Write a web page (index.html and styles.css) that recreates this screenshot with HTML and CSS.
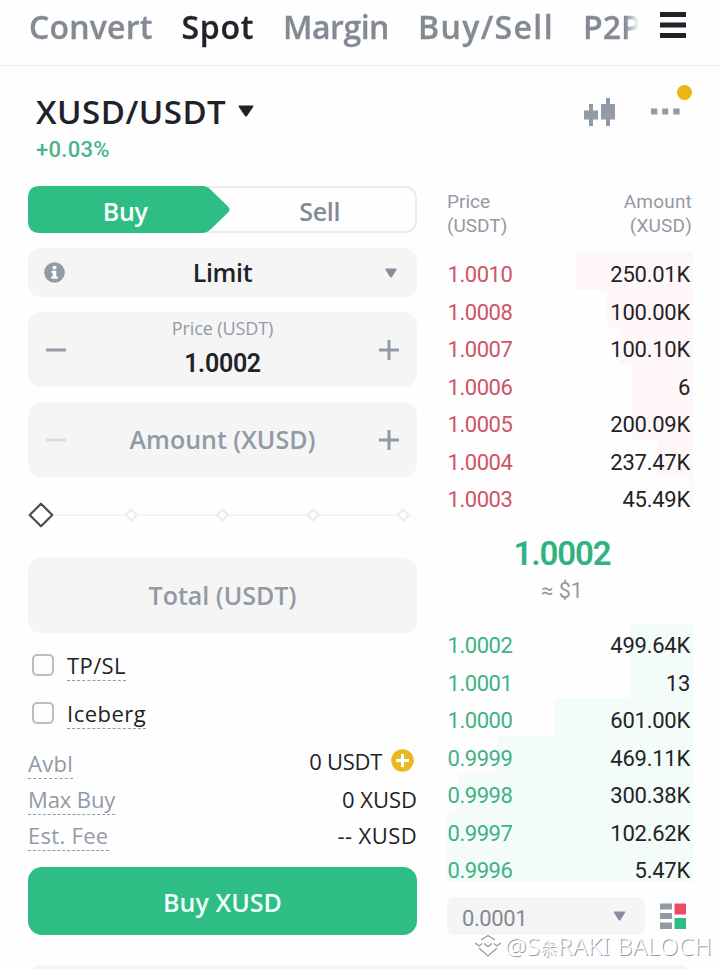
FILE: index.html
```html
<!DOCTYPE html>
<html lang="en">
<head>
<meta charset="utf-8">
<title>XUSD/USDT Spot</title>
<link rel="stylesheet" href="styles.css">
</head>
<body>
<div class="app">
  <header class="topbar">
    <nav class="tabs">
      <span class="tab t-convert">Convert</span>
      <span class="tab t-spot active">Spot</span>
      <span class="tab t-margin">Margin</span>
      <span class="tab t-buysell">Buy/Sell</span>
      <span class="tab t-p2p">P2P</span>
    </nav>
    <svg class="menu" width="26" height="26" viewBox="0 0 26 26"><path d="M0 0h26v5H0zM0 10.500h26v5H0zM0 21h26v5H0z" fill="#1e2329"/></svg>
  </header>

  <section class="pair">
    <div>
      <div class="pair-name"><span class="pair-text">XUSD/USDT</span><svg width="16" height="12" viewBox="0 0 16 12"><path d="M1.2.5h13.6q1 0 .5 1.2L9 11q-1 1-2 0L.7 1.700Q.2.500 1.200.500z" fill="#1e2329"/></svg></div>
      <div class="change">+0.03%</div>
    </div>
    <div class="pair-icons">
      <svg width="32" height="28" viewBox="0 0 32 28"><path d="M0 12.500h5V6h4v6.500h5v9H9V28H5v-6.500H0zM17 6h5V0h4v6h5v15.500h-5V28h-4v-6.500h-5z" fill="#929aa5"/></svg>
      <div class="more"><svg width="30" height="7" viewBox="0 0 30 7"><path d="M0 .5h6.300v6H0zM11.200.5h6v6h-6zM22.300.5h6.300v6h-6.300z" fill="#929aa5"/></svg><i class="dot"></i></div>
    </div>
  </section>

  <main class="columns">
    <section class="form">
      <div class="sides">
        <svg class="sides-bg" width="202" height="47" viewBox="0 0 202 47"><path d="M12 0H174Q179 0 183 4L200 20.500Q203 23.500 200 26.500L183 43Q179 47 174 47H12Q0 47 0 35V12Q0 0 12 0z" fill="#2ebd85"/></svg>
        <span class="side buy">Buy</span><span class="side sell">Sell</span>
      </div>
      <div class="field type">
        <svg width="21" height="21" viewBox="0 0 21 21"><circle cx="10.500" cy="10.500" r="10.300" fill="#929aa5"/><path d="M8.700 4h3.600v3.200H8.700zM7.500 8.700h4.800v6h1.500v2H7.200v-2h1.500v-4H7.500z" fill="#fff"/></svg>
        <span class="limit">Limit</span>
        <svg width="12" height="10" viewBox="0 0 12 10"><path d="M1 .5h10q1.200 0 .5 1.200L7 9q-1 1-2 0L.5 1.700Q-.2.500 1 .500z" fill="#848e9c"/></svg>
      </div>
      <div class="field price">
        <svg class="step" width="20" height="20" viewBox="0 0 20 20"><path d="M0 8.500h20v3H0z" fill="#929aa5"/></svg>
        <div class="stack"><span class="label">Price (USDT)</span><span class="value">1.0002</span></div>
        <svg class="step" width="20" height="20" viewBox="0 0 20 20"><path d="M0 8.500h8.500V0h3v8.500H20v3h-8.500V20h-3v-8.500H0z" fill="#929aa5"/></svg>
      </div>
      <div class="field amount">
        <svg class="step" width="20" height="20" viewBox="0 0 20 20"><path d="M0 8.500h20v3H0z" fill="#d9dce0"/></svg>
        <span class="hint h-amount">Amount (XUSD)</span>
        <svg class="step" width="20" height="20" viewBox="0 0 20 20"><path d="M0 8.500h8.500V0h3v8.500H20v3h-8.500V20h-3v-8.500H0z" fill="#929aa5"/></svg>
      </div>
      <svg class="slider" width="389" height="28" viewBox="0 0 389 28">
        <path d="M26 14H375" stroke="#f3f4f5" stroke-width="2"/>
        <g fill="#fff" stroke="#eaecef" stroke-width="2" stroke-linejoin="round"><path d="M103.500 8.500l5.500 5.500-5.500 5.500L98 14zM194.500 8.500l5.500 5.500-5.500 5.500L189 14zM285 8.500l5.500 5.500-5.500 5.500-5.500-5.500zM375.500 8.500l5.500 5.500-5.500 5.500-5.500-5.500z"/></g>
        <path d="M13 2.700L24.300 14 13 25.300 1.700 14z" fill="#fff" stroke="#474d57" stroke-width="2.200" stroke-linejoin="round"/>
      </svg>
      <div class="field total"><span class="hint h-total">Total (USDT)</span></div>
      <div class="check"><i class="box"></i><span class="under tpsl">TP/SL</span></div>
      <div class="check"><i class="box"></i><span class="under ice">Iceberg</span></div>
      <dl class="facts">
        <div class="fact"><dt class="under avbl">Avbl</dt><dd class="with-plus"><span class="v1">0 USDT</span><svg width="23" height="23" viewBox="0 0 23 23"><circle cx="11.500" cy="11.500" r="11.300" fill="#e9b91f"/><path d="M5 10h5V5h3v5h5v3h-5v5h-3v-5H5z" fill="#fff"/></svg></dd></div>
        <div class="fact"><dt class="under maxbuy">Max Buy</dt><dd class="v2">0 XUSD</dd></div>
        <div class="fact"><dt class="under fee">Est. Fee</dt><dd class="v3">-- XUSD</dd></div>
      </dl>
      <div class="submit"><span>Buy XUSD</span></div>
    </section>

    <section class="book">
      <div class="book-head"><span>Price<br>(USDT)</span><span class="right">Amount<br>(XUSD)</span></div>
      <div class="rows asks">
        <div class="row w47"><span>1.0010</span><b>250.01K</b></div>
        <div class="row w35"><span>1.0008</span><b>100.00K</b></div>
        <div class="row w29"><span>1.0007</span><b>100.10K</b></div>
        <div class="row w24"><span>1.0006</span><b>6</b></div>
        <div class="row w24"><span>1.0005</span><b>200.09K</b></div>
        <div class="row w14"><span>1.0004</span><b>237.47K</b></div>
        <div class="row w1"><span>1.0003</span><b>45.49K</b></div>
      </div>
      <div class="last">1.0002</div>
      <div class="fiat">≈ $1</div>
      <div class="rows bids">
        <div class="row w25"><span>1.0002</span><b>499.64K</b></div>
        <div class="row w25"><span>1.0001</span><b>13</b></div>
        <div class="row w56"><span>1.0000</span><b>601.00K</b></div>
        <div class="row w80"><span>0.9999</span><b>469.11K</b></div>
        <div class="row w95"><span>0.9998</span><b>300.38K</b></div>
        <div class="row w100"><span>0.9997</span><b>102.62K</b></div>
        <div class="row w100 end"><span>0.9996</span><b>5.47K</b></div>
      </div>
      <div class="book-foot">
        <div class="tick"><span>0.0001</span><svg width="13" height="10" viewBox="0 0 12 10"><path d="M1 .5h10q1.200 0 .5 1.200L7 9q-1 1-2 0L.5 1.700Q-.2.500 1 .500z" fill="#848e9c"/></svg></div>
        <svg width="27" height="27" viewBox="0 0 27 27"><path d="M0 .5h12v6H0zM0 10h12v6H0zM0 19.500h12v6.500H0z" fill="#929aa5"/><path d="M14.500.5H26v11H14.500z" fill="#ea4d63"/><path d="M14.500 15H26v11H14.500z" fill="#2ebd85"/></svg>
      </div>
    </section>
  </main>
  <div class="next-panel"></div>
  <div class="watermark">
    <svg width="28" height="24" viewBox="0 0 28 24"><g fill="none" stroke="#fff" stroke-width="3"><path d="M7 6l7-4.500L21 6M1 9l4 3 3-2.500M27 9l-4 3-3-2.500M10 9.500l4 3 4-3M5 14l9 8 9-8"/></g><g fill="none" stroke="#929aa5" stroke-width="1.200"><path d="M7 6l7-4.500L21 6M1 9l4 3 3-2.500M27 9l-4 3-3-2.500M10 9.500l4 3 4-3M5 14l9 8 9-8"/></g></svg>
    <span>@S<small>叅</small>RAKI BALOCH</span>
  </div>
</div>
</body>
</html>
```
FILE: styles.css
```css
* { box-sizing: border-box; }
body { margin: 0; background: #fefefe; color: #1e2329; font-family: "Open Sans", "Noto Sans", sans-serif; }
svg { display: block; flex: none; }
.app { position: relative; width: 720px; height: 969px; overflow: hidden; }
.topbar { display: flex; height: 66px; border-bottom: 1px solid #eaecef; padding: 0 34px 0 29px; justify-content: space-between; }
.tabs { display: flex; width: 611px; gap: 29px; overflow: hidden; line-height: 53px; font-size: 32px; font-weight: 600; color: #848a93; white-space: nowrap; -webkit-text-stroke: .3px currentColor; -webkit-mask-image: linear-gradient(90deg, #000 596px, transparent 610px); mask-image: linear-gradient(90deg, #000 596px, transparent 610px); }
.tab { flex: none; }
.t-convert { letter-spacing: .2px; }
.t-spot { letter-spacing: .7px; }
.t-margin { letter-spacing: -.5px; }
.t-buysell { letter-spacing: 1.4px; }
.active { color: #1e2329; }
.menu { margin-top: 12px; }
.pair { display: flex; justify-content: space-between; height: 120px; padding: 0 39px 0 36px; }
.pair-name { display: flex; align-items: center; gap: 12px; height: 46px; margin-top: 22px; font-size: 33px; font-weight: 600; line-height: 46px; letter-spacing: .5px; }
.pair-text { padding-top: 1px; }
.change { margin-top: 1px; font: 500 22px/30px Roboto, sans-serif; letter-spacing: .3px; color: #4ab58a; }
.pair-icons { display: flex; gap: 35px; padding-top: 32px; }
.more { position: relative; padding-top: 10px; }
.dot { position: absolute; right: -11px; top: -13px; width: 15px; height: 15px; border-radius: 50%; background: #edb711; }
.columns { display: flex; gap: 30px; padding-left: 28px; }
.form { width: 389px; display: flex; flex-direction: column; }
.sides { position: relative; display: flex; height: 47px; border-radius: 12px; box-shadow: inset 0 0 0 2px #ececee; font-size: 25px; font-weight: 600; line-height: 50px; letter-spacing: -.3px; text-align: center; }
.sides-bg { position: absolute; left: 0; top: 0; }
.side { position: relative; width: 195px; }
.buy { color: #fff; }
.sell { color: #848a93; }
.field { display: flex; align-items: center; justify-content: space-between; padding: 0 18px; background: #f5f5f5; border-radius: 13px; font-size: 25px; font-weight: 600; }
.type { height: 49px; margin-top: 15px; padding: 0 20px 0 16px; }
.limit { margin-right: 5px; padding-bottom: 1px; letter-spacing: -.4px; }
.price { height: 75px; margin-top: 15px; }
.amount { height: 75px; margin-top: 15px; }
.stack { display: flex; flex-direction: column; align-items: center; height: 75px; }
.label { font-size: 18px; font-weight: 400; line-height: 32px; letter-spacing: -.1px; color: #929aa5; }
.value { margin-top: 2px; font: 600 25px/36px Roboto, sans-serif; letter-spacing: -.3px; }
.hint { padding-bottom: 1px; color: #929aa5; }
.h-amount { letter-spacing: 0; }
.slider { margin: 24px 0 29px; }
.total { height: 75px; justify-content: center; margin-bottom: 9px; }
.check { display: flex; height: 48px; padding-left: 4px; gap: 13px; font-size: 22px; align-items: flex-start; }
.box { width: 22px; height: 22px; margin-top: 12px; border: 2px solid #b7bdc6; border-radius: 5px; }
.under { line-height: 27px; height: 29px; border-bottom: 1px dashed #929aa5; }
.check .under { margin-top: 10px; }
.tpsl { letter-spacing: .4px; }
.ice { letter-spacing: .5px; }
.avbl, .fee { letter-spacing: .3px; }
.maxbuy { letter-spacing: -.1px; }
.facts { margin: 12px 0 0; font-size: 22px; }
.fact { display: flex; height: 36px; justify-content: space-between; line-height: 27px; }
.fact dt { color: #929aa5; }
.fact dd { margin: 0; }
.with-plus { display: flex; gap: 9px; padding-right: 3px; }
.v1 { margin-top: -2px; letter-spacing: -.3px; }
.with-plus svg { margin-top: -1px; }
.v3 { letter-spacing: .4px; }
.submit { height: 68px; margin-top: 9px; border-radius: 14px; background: #2ebd85; color: #effff8; font-size: 25px; font-weight: 600; line-height: 71px; letter-spacing: .05px; text-align: center; }
.book { width: 246px; font-family: Roboto, sans-serif; }
.book-head { display: flex; justify-content: space-between; height: 66px; padding: 4px 1px 0 0; font-size: 19px; line-height: 24px; color: #929aa5; }
.right { text-align: right; letter-spacing: .2px; }
.row { display: flex; justify-content: space-between; height: 37.5px; padding: 7px 3px 0 .5px; font-size: 22px; line-height: 31px; letter-spacing: -.25px; background: linear-gradient(var(--depth), var(--depth)) right top / var(--w) 100% no-repeat; }
.row span { letter-spacing: -.45px; }
.row b { font-weight: 400; }
.asks { --depth: #fff7f7; }
.asks span { color: #d05468; }
.bids { --depth: #f3fcf8; }
.bids span { color: #3fb284; }
.w1 { --w: 3px; } .w14 { --w: 36px; } .w24 { --w: 61px; } .w25 { --w: 63px; } .w29 { --w: 73px; }
.w35 { --w: 86px; } .w47 { --w: 117px; } .w56 { --w: 138px; } .w80 { --w: 196px; } .w95 { --w: 234px; } .w100 { --w: 246px; }
.end { height: 34px; }
.last { height: 46px; margin-top: 15.5px; padding-top: 1px; padding-right: 16px; font-size: 33px; font-weight: 600; line-height: 46px; color: #2fb380; text-align: center; letter-spacing: -1.1px; }
.fiat { height: 47px; padding-right: 16px; font-size: 21.5px; line-height: 29px; color: #929aa5; text-align: center; }
.book-foot { display: flex; gap: 15px; margin-top: 15px; align-items: center; }
.tick { display: flex; width: 198px; height: 38px; padding: 4px 19px 0 15px; align-items: center; justify-content: space-between; border-radius: 8px; background: #f5f5f5; color: #848a93; font-size: 22px; letter-spacing: -.4px; }
.tick svg { margin-top: -4px; }
.next-panel { position: absolute; left: 28px; top: 965px; width: 664px; height: 30px; border-radius: 14px; background: #f5f5f5; }
.watermark { position: absolute; left: 474px; top: 934px; display: flex; gap: 3px; font: 300 24px/24px "Noto Sans", "Noto Sans CJK SC", sans-serif; letter-spacing: .45px; color: #fff; white-space: nowrap; text-shadow: 1px 1px 0 #929aa5; }
.watermark small { font-size: 17px; }
```
